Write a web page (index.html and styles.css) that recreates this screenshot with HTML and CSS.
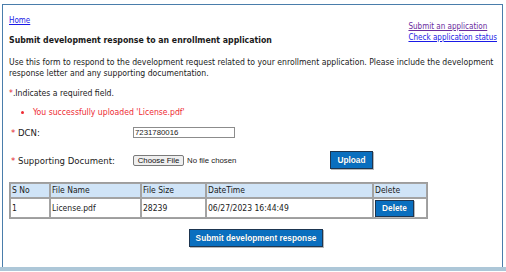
FILE: index.html
```html
<!DOCTYPE html>
<html lang="en">
<head>
<meta charset="utf-8">
<title>Submit development response</title>
<link rel="stylesheet" href="styles.css">
</head>
<body>
<div class="page">
  <div class="header">
    <div class="header-left">
      <a class="link" href="#">Home</a>
      <h1 class="title">Submit development response to an enrollment application</h1>
    </div>
    <div class="header-right">
      <a class="link visited" href="#">Submit an application</a>
      <a class="link" href="#">Check application status</a>
    </div>
  </div>
  <p class="intro">Use this form to respond to the development request related to your enrollment application. Please include the development response letter and any supporting documentation.</p>
  <p class="required"><span class="req">*</span>.Indicates a required field.</p>
  <ul class="messages">
    <li>You successfully uploaded 'License.pdf'</li>
  </ul>
  <div class="form-row dcn-row">
    <label class="label"><span class="req">*</span> DCN:</label>
    <div class="text-input">7231780016</div>
  </div>
  <div class="form-row file-row">
    <label class="label"><span class="req">*</span> Supporting Document:</label>
    <div class="file-input">
      <span class="file-btn">Choose File</span>
      <span class="file-text">No file chosen</span>
    </div>
    <button class="btn upload-btn">Upload</button>
  </div>
  <table class="files">
    <thead>
      <tr>
        <th class="c-no">S No</th>
        <th class="c-name">File Name</th>
        <th class="c-size">File Size</th>
        <th class="c-date">DateTime</th>
        <th class="c-del">Delete</th>
      </tr>
    </thead>
    <tbody>
      <tr>
        <td>1</td>
        <td>License.pdf</td>
        <td>28239</td>
        <td>06/27/2023 16:44:49</td>
        <td><button class="btn delete-btn">Delete</button></td>
      </tr>
    </tbody>
  </table>
  <div class="submit-row">
    <button class="btn submit-btn">Submit development response</button>
  </div>
</div>
<div class="band"></div>
</body>
</html>
```

FILE: styles.css
```css
html, body {
  margin: 0;
  padding: 0;
  background: #ffffff;
}
body {
  font-family: "DejaVu Sans Condensed", "DejaVu Sans", sans-serif;
  font-stretch: condensed;
  font-size: 8.6px;
  color: #1a1a1a;
  width: 506px;
  height: 272px;
  overflow: hidden;
}
.page {
  margin: 4px 3px 0 2px;
  height: 263px;
  border: 1px solid #4a7dab;
  border-bottom: none;
  padding: 10px 4px 0 6px;
  box-sizing: border-box;
}
.band {
  height: 4px;
  background: #adc7d8;
}
.header {
  display: flex;
  justify-content: space-between;
  align-items: flex-start;
  padding-right: 1px;
}
.header-left {
  display: flex;
  flex-direction: column;
  align-items: flex-start;
}
.header-right {
  display: flex;
  flex-direction: column;
  align-items: flex-start;
  padding-top: 6px;
  font-size: 8px;
}
.link {
  color: #1a1ae6;
  text-decoration: underline;
  line-height: 11px;
}
.header-left .link {
  font-size: 8px;
}
.link.visited {
  color: #6a2c9e;
}
.title {
  margin: 9px 0 0 0;
  font-size: 8.7px;
  font-weight: bold;
  line-height: 11px;
}
.intro {
  margin: 11px 0 0 0;
  line-height: 10.5px;
}
.required {
  margin: 10px 0 0 0;
  line-height: 10px;
}
.req {
  color: #e3262e;
}
.messages {
  margin: 9px 0 0 0;
  padding-left: 24px;
  color: #ee2a33;
  line-height: 10px;
}
.form-row {
  display: flex;
  align-items: center;
}
.dcn-row {
  margin-top: 10px;
  height: 11px;
}
.file-row {
  margin-top: 13px;
  height: 18px;
}
.label {
  width: 124px;
  padding-left: 2px;
  box-sizing: border-box;
  font-size: 9.5px;
}
.text-input {
  width: 102px;
  height: 11px;
  box-sizing: border-box;
  border: 1px solid #8c8c8c;
  font-family: "Liberation Sans", Arial, sans-serif;
  font-size: 7.8px;
  line-height: 9px;
  padding-left: 1px;
}
.file-input {
  width: 197px;
  display: flex;
  align-items: center;
  font-family: "Liberation Sans", Arial, sans-serif;
  font-size: 7.8px;
}
.file-btn {
  width: 51px;
  height: 11px;
  box-sizing: border-box;
  border: 1px solid #7a7a7a;
  border-radius: 2px;
  background: #efefef;
  color: #111;
  display: flex;
  align-items: center;
  justify-content: center;
}
.file-text {
  margin-left: 3px;
  color: #222;
}
.btn {
  font-family: "Liberation Sans", Arial, sans-serif;
  font-weight: bold;
  font-size: 8.3px;
  color: #ffffff;
  background: #0a6fbf;
  border: 1px solid #1d3550;
  box-shadow: 1px 1px 0 #b8b8b8;
  padding: 0;
  margin: 0;
  text-shadow: 0 0 1px rgba(0,0,0,0.3);
  cursor: pointer;
}
.upload-btn {
  width: 43px;
  height: 18px;
}
.files {
  margin-top: 13px;
  border-collapse: separate;
  border-spacing: 0;
  border: 1px solid #9d9d9d;
  width: 419px;
  font-size: 8.5px;
}
.files th, .files td {
  border: 1px solid #a3a3a3;
  text-align: left;
  font-weight: normal;
  padding: 0 0 0 1px;
  white-space: nowrap;
}
.files th {
  background: #d0e4f7;
  height: 13px;
  line-height: 11px;
}
.files td {
  height: 18px;
}
.c-no { width: 37px; }
.c-name { width: 88px; }
.c-size { width: 62px; }
.c-date { width: 164px; }
.c-del { width: 51px; }
.delete-btn {
  width: 39px;
  height: 17px;
  display: block;
}
.submit-row {
  margin-top: 10px;
  display: flex;
  justify-content: center;
  padding-left: 5px;
}
.submit-btn {
  width: 134px;
  height: 18px;
}
```
